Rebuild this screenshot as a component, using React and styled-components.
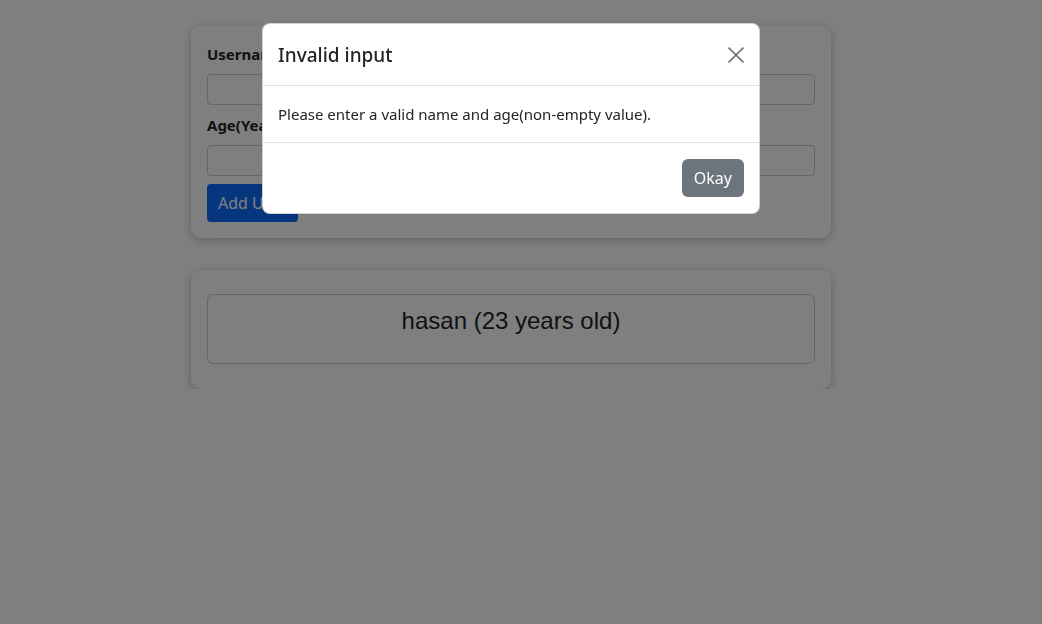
import React from 'react';
import styled, { createGlobalStyle } from 'styled-components';

const GlobalStyle = createGlobalStyle`
    * {
        box-sizing: border-box;
    }
    body {
        margin: 0;
        padding-right: 20px;
        background: #fff;
        font-family: "Noto Sans", "Open Sans", sans-serif;
        font-size: 16px;
        color: #212529;
    }
`;

const Page = styled.div`
    display: flex;
    flex-direction: column;
    align-items: center;
    gap: 32px;
    padding-top: 26px;
`;

const Card = styled.div`
    width: 640px;
    background: #fff;
    border-radius: 10px;
    box-shadow: 0 2px 8px rgba(0, 0, 0, 0.26);
    padding: ${(p) => p.$pad || '16px'};
`;

const Form = styled.form`
    display: flex;
    flex-direction: column;
`;

const Label = styled.label`
    font-weight: 700;
    font-size: 15px;
    line-height: 24px;
    margin-bottom: 8px;
`;

const Input = styled.input`
    height: 31px;
    border: 1px solid #ccc;
    border-radius: 4px;
    margin-bottom: 8px;
    font: inherit;
`;

const SubmitButton = styled.button`
    align-self: flex-start;
    width: 91px;
    height: 38px;
    border: none;
    border-radius: 4px;
    background: #0d6efd;
    color: #fff;
    font-family: inherit;
    font-size: 16px;
`;

const UserItem = styled.div`
    border: 1px solid #ccc;
    border-radius: 6px;
    padding: 12px 0 28px;
    text-align: center;
    font-family: "Liberation Sans", Arial, sans-serif;
    font-size: 24px;
    line-height: 28px;
    color: #212529;
`;

const Backdrop = styled.div`
    position: fixed;
    inset: 0;
    background: rgba(0, 0, 0, 0.5);
`;

const Dialog = styled.div`
    position: fixed;
    top: 23px;
    left: 262px;
    width: 498px;
    background: #fff;
    border: 1px solid rgba(0, 0, 0, 0.175);
    border-radius: 8px;
    display: flex;
    flex-direction: column;
`;

const DialogHeader = styled.header`
    display: flex;
    align-items: center;
    justify-content: space-between;
    padding: 16px 15px 15px 15px;
    border-bottom: 1px solid #dee2e6;
`;

const DialogTitle = styled.h5`
    margin: 0;
    font-size: 19px;
    font-weight: 500;
    line-height: 30px;
`;

const CloseButton = styled.button`
    width: 16px;
    height: 16px;
    padding: 0;
    border: none;
    background: transparent;
    opacity: 0.55;
    display: flex;
    align-items: center;
    justify-content: center;
`;

const DialogBody = styled.div`
    padding: 16px 15px;
    font-size: 15px;
    line-height: 24px;
`;

const DialogFooter = styled.footer`
    display: flex;
    justify-content: flex-end;
    padding: 16px 15px 16px;
    border-top: 1px solid #dee2e6;
`;

const OkayButton = styled.button`
    height: 38px;
    padding: 0 12px;
    border: none;
    border-radius: 6px;
    background: #6c757d;
    color: #fff;
    font-family: inherit;
    font-size: 16px;
`;

const App = () => {
    return (
        <>
            <GlobalStyle />
            <Page>
                <Card>
                    <Form onSubmit={(e) => e.preventDefault()}>
                        <Label htmlFor="username">Username</Label>
                        <Input id="username" type="text" />
                        <Label htmlFor="age">Age(Years)</Label>
                        <Input id="age" type="number" />
                        <SubmitButton type="submit">Add User</SubmitButton>
                    </Form>
                </Card>
                <Card $pad="24px 16px 25px">
                    <UserItem>hasan (23 years old)</UserItem>
                </Card>
            </Page>

            <Backdrop />
            <Dialog role="dialog">
                <DialogHeader>
                    <DialogTitle>Invalid input</DialogTitle>
                    <CloseButton aria-label="Close">
                        <svg width="16" height="16" viewBox="0 0 16 16">
                            <path d="M0.5 0.5L15.5 15.5M15.5 0.5L0.5 15.5" stroke="#000" strokeWidth="1.6" />
                        </svg>
                    </CloseButton>
                </DialogHeader>
                <DialogBody>Please enter a valid name and age(non-empty value).</DialogBody>
                <DialogFooter>
                    <OkayButton>Okay</OkayButton>
                </DialogFooter>
            </Dialog>
        </>
    );
};

export default App;
